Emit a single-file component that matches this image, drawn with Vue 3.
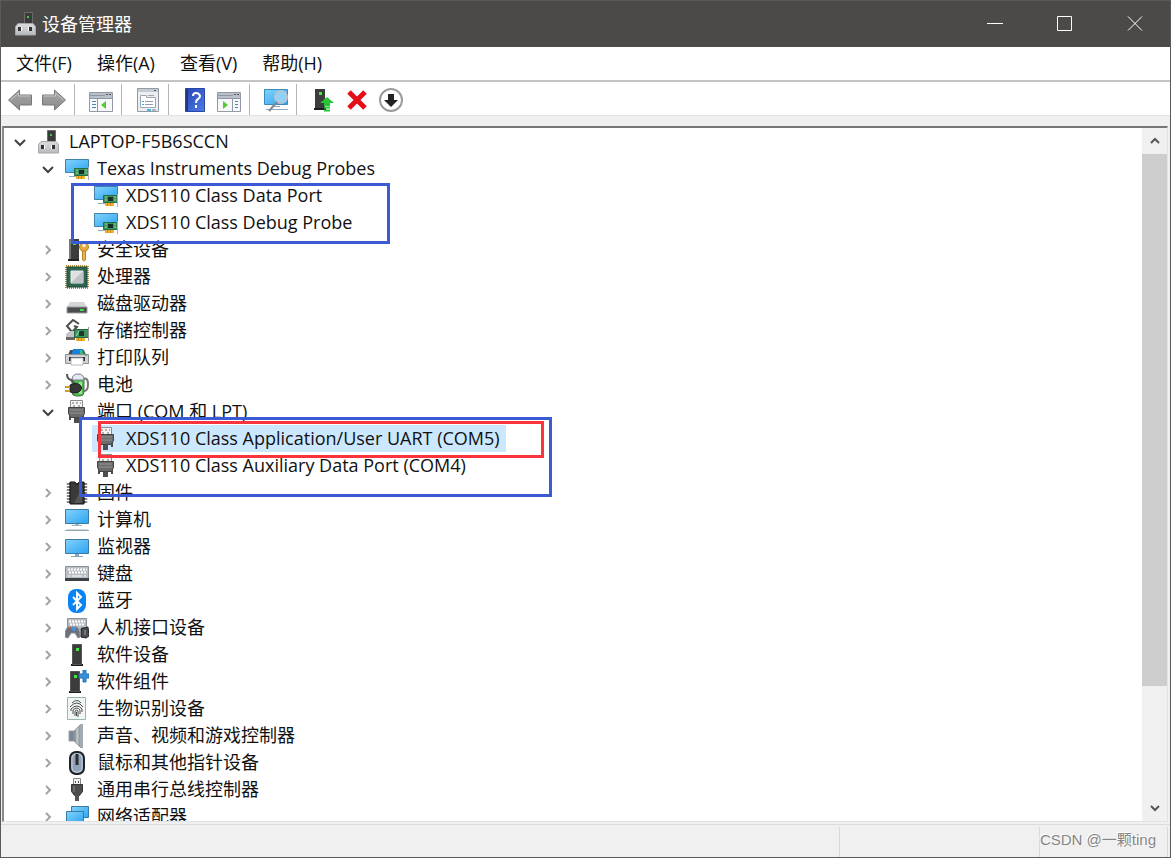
<template>
  <div class="window">
    <svg class="sprite" aria-hidden="true">
      <defs>
        <linearGradient id="screen" x1="0" y1="0" x2="1" y2="1">
          <stop offset="0" stop-color="#84d3fb" />
          <stop offset="1" stop-color="#2ba3f2" />
        </linearGradient>
        <linearGradient id="metal" x1="0" y1="0" x2="0" y2="1">
          <stop offset="0" stop-color="#dcdce0" />
          <stop offset="1" stop-color="#b9babf" />
        </linearGradient>
        <linearGradient id="arrow" x1="0" y1="0" x2="0" y2="1">
          <stop offset="0" stop-color="#a8a8a8" />
          <stop offset="1" stop-color="#8a8a8a" />
        </linearGradient>
        <linearGradient id="cone" x1="0" y1="0" x2="1" y2="0">
          <stop offset="0" stop-color="#66707c" />
          <stop offset="0.5" stop-color="#c6ccd2" />
          <stop offset="1" stop-color="#8f989f" />
        </linearGradient>
        <linearGradient id="helpbook" x1="0" y1="0" x2="1" y2="1">
          <stop offset="0" stop-color="#2746b0" />
          <stop offset="1" stop-color="#4f7bea" />
        </linearGradient>
      </defs>

      <symbol id="i-computer" viewBox="0 0 24 24">
        <path d="M10.500.5h8v12h-8z" fill="#3a3a3a" stroke="#6c6c6c" />
        <path d="M13 4h2v2h-2z" fill="#3fd03f" />
        <path d="M4 11.500h15l2.500 3v8.500h-20v-8.500z" fill="url(#metal)" stroke="#a6a6aa" />
        <path d="M4 15h3v4H4zM15 15h3v4h-3z" fill="#333" />
        <path d="M7 15h1v4H7zM14 15h1v4h-1z" fill="#fff" />
      </symbol>
      <symbol id="i-probe" viewBox="0 0 24 24">
        <path d="M.5 2.500h23v13H.5z" fill="url(#screen)" stroke="#3f81aa" />
        <path d="M4 19.500h7" stroke="#91a8b8" />
        <path d="M9.500 11.500h14v7h-14z" fill="#3e9460" stroke="#256d42" />
        <path d="M14 13h5v4h-5z" fill="#183023" />
        <path d="M11 13h2M11 16h2M20 13h2M20 16h2" stroke="#97d5a9" />
        <path d="M11 19h9v3h-9z" fill="#f5b02a" />
        <path d="M13.500 19v3M16.500 19v3" stroke="#c98710" />
        <path d="M23.500 10v13" stroke="#b0b0b0" />
      </symbol>
      <symbol id="i-security" viewBox="0 0 24 24">
        <path d="M3 21h11v2H3z" fill="#222" />
        <path d="M4 1h10v20H4z" fill="#3c3c3c" />
        <path d="M4 1h2v20H4z" fill="#777" />
        <path d="M8 4h3v3H8z" fill="#3fe03f" />
        <circle cx="19" cy="9" r="4.500" fill="#e5ad3c" stroke="#b5832c" />
        <path d="M17.500 13h3v9l-1.500 1-1.500-1z" fill="#e9b848" stroke="#b5832c" />
        <circle cx="19" cy="7.500" r="1.500" fill="#fff" />
      </symbol>
      <symbol id="i-cpu" viewBox="0 0 24 24">
        <path d="M1 1h22v22H1z" fill="none" stroke="#b38a37" stroke-width="2" stroke-dasharray="1 1" />
        <path d="M2 2h20v20H2z" fill="#2d6550" stroke="#1d4a38" />
        <path d="M6 6h12v12H6z" fill="#dfe0e2" stroke="#eef1ef" />
        <path d="M18 6v12H6z" fill="#bfc2c5" />
      </symbol>
      <symbol id="i-disk" viewBox="0 0 24 24">
        <path d="M5 10h14l3 5H2z" fill="#d3d5d8" />
        <path d="M2 15h20v6H2z" fill="#4a4c50" stroke="#9b9da1" />
        <path d="M15 17h4v2h-4z" fill="#36e045" />
      </symbol>
      <symbol id="i-storage" viewBox="0 0 24 24">
        <path d="M14 5L8 1 2 7l5 6 5-5-3-1" fill="none" stroke="#4c4c4c" stroke-width="2" />
        <path d="M1 15l4-3h5v8H1z" fill="#c3c5c8" />
        <path d="M1 18h9v3H1z" fill="#666" />
        <path d="M9.500 10.500h14v8h-14z" fill="#3e9460" stroke="#226541" />
        <path d="M14 12h5v5h-5z" fill="#1b382a" />
        <path d="M11 17l3-5" stroke="#9adbae" />
        <path d="M11 19h9v3h-9z" fill="#f5b02a" />
        <path d="M13.500 19v3M16.500 19v3" stroke="#c98710" />
        <path d="M23.500 8v14" stroke="#9b9b9b" />
      </symbol>
      <symbol id="i-printer" viewBox="0 0 24 24">
        <path d="M5 4h14l2 5H3z" fill="#4b4d52" />
        <path d="M8 3h10l1 5H7z" fill="#1684dd" />
        <path d="M15 4h2l1 4h-3z" fill="#36c26d" />
        <path d="M.5 8.500h23v9H.5z" fill="#cfd1d4" stroke="#8b8f94" />
        <path d="M4 11h16v4H4z" fill="#2d2f32" />
        <path d="M6 12h12v7H6z" fill="#fff" stroke="#b5b8bd" />
        <path d="M20 9.500h2" stroke="#31c749" />
      </symbol>
      <symbol id="i-battery" viewBox="0 0 24 24">
        <path d="M18 6q5-2 5 5t-4 7" fill="none" stroke="#777" stroke-width="2" />
        <rect x="7" y="3" width="12" height="20" rx="4" fill="#4fb951" stroke="#4d6c4f" />
        <path d="M7 7q0-6 6-6t6 6z" fill="#e6e8f2" stroke="#777a8d" />
        <path d="M14 9h3v12h-3z" fill="#9ae594" />
        <path d="M2 1q0 5 4 6l4 4" fill="none" stroke="#555" stroke-width="2" />
        <path d="M5 12q9-4 12 3-3 7-12 4z" fill="#363636" stroke="#1f1f1f" />
        <path d="M0 14h5M0 18h5" stroke="#d39a22" stroke-width="2" />
      </symbol>
      <symbol id="i-port" viewBox="0 0 24 24">
        <path d="M5.500.5h12v7h-12z" fill="#f4f4f4" stroke="#8d8d8d" />
        <path d="M7 3h2M11 3h2M15 3h1M8 6h2M13 6h2" stroke="#6c6c6c" />
        <path d="M3.500 7.500h16v6l-2 4h-12l-2-4z" fill="#6b6b6b" stroke="#434343" />
        <path d="M5 10h13M5 13h13" stroke="#959595" />
        <path d="M4 16h2v4H4zM17 16h2v4h-2zM9 18h5v5H9z" fill="#4d4d4d" />
      </symbol>
      <symbol id="i-firmware" viewBox="0 0 24 24">
        <path d="M2 3h20M2 6h20M2 9h20M2 12h20M2 15h20M2 18h20M2 21h20" stroke="#444" stroke-width="2" />
        <path d="M1 3h3M1 6h3M1 9h3M1 12h3M1 15h3M1 18h3M1 21h3M20 3h3M20 6h3M20 9h3M20 12h3M20 15h3M20 18h3M20 21h3" stroke="#ccc" />
        <path d="M5 1h5l2 3 2-3h5v22H5z" fill="#3a3a3a" stroke="#151515" />
        <path d="M17 7v15H9z" fill="#555" />
      </symbol>
      <symbol id="i-pc" viewBox="0 0 24 24">
        <path d="M.5 1.500h23v14H.5z" fill="url(#screen)" stroke="#3a7ba6" />
        <path d="M10 16h4v1h3v1H7v-1h3z" fill="#9db3c1" />
        <path d="M2 21h20l2 2H0z" fill="#cbd4db" />
        <path d="M0 22.500h24" stroke="#93a7b5" />
      </symbol>
      <symbol id="i-monitor" viewBox="0 0 24 24">
        <path d="M.5 4.500h23v14H.5z" fill="url(#screen)" stroke="#3a7ba6" />
        <path d="M10 19h4v2h4v1H6v-1h4z" fill="#8ca6b7" />
      </symbol>
      <symbol id="i-keyboard" viewBox="0 0 24 24">
        <path d="M.5 4.500h23v12H.5z" fill="#b9bec4" stroke="#8b929a" />
        <path d="M3 7.500h19M4 10.500h17" stroke="#fff" stroke-width="2" stroke-dasharray="2 1" />
        <path d="M3 14h2M7 14h10M19 14h2" stroke="#fff" />
        <path d="M0 16h24v3H0z" fill="#3d4146" />
      </symbol>
      <symbol id="i-bluetooth" viewBox="0 0 24 24">
        <rect x="3" y="0" width="18" height="24" rx="8" fill="#0a84f5" />
        <path d="M8 8l8 8-4 4V4l4 4-8 8" fill="none" stroke="#fff" stroke-width="2" />
      </symbol>
      <symbol id="i-hid" viewBox="0 0 24 24">
        <path d="M2.500 2.500h19v11h-19z" fill="#b9bec4" stroke="#8b929a" />
        <path d="M4 5.500h16M5 8.500h15" stroke="#fff" stroke-width="2" stroke-dasharray="2 1" />
        <path d="M3 11h9q3 3 3 10l-2 1-3-5H6l-3 5-3-1q0-8 3-10z" fill="#6a717a" stroke="#858c95" />
        <circle cx="9" cy="13" r="2" fill="#3996e8" />
        <circle cx="6" cy="12" r="1" fill="#e2594a" />
        <path d="M16 14q0-3 3-2l4-1 1 9-3 2-5-1z" fill="#484c52" stroke="#222" />
        <path d="M20 14v5" stroke="#9ba1a8" />
      </symbol>
      <symbol id="i-software" viewBox="0 0 24 24">
        <path d="M6 21h12v2H6z" fill="#1e1e1e" />
        <path d="M7.500 1.500h9v20h-9z" fill="#3c3c3c" stroke="#555" />
        <path d="M11 5h3v3h-3z" fill="#42e642" />
      </symbol>
      <symbol id="i-component" viewBox="0 0 24 24">
        <path d="M4 21h12v2H4z" fill="#1e1e1e" />
        <path d="M5.500 1.500h9v20h-9z" fill="#3c3c3c" stroke="#555" />
        <path d="M9 5h3v3H9z" fill="#42e642" />
        <path d="M18 0h3v4h3v4h-3v4h-3V8h-4V4h4z" fill="#3b8fd4" stroke="#2475ba" />
      </symbol>
      <symbol id="i-biometric" viewBox="0 0 24 24">
        <path d="M2.500.5h18v22h-18z" fill="#f1f5f3" stroke="#9ab7ad" />
        <path d="M7 6q5-5 9 0M5 10q7-8 13 0M6 14v-2q6-6 11 0v3M8 17v-4q4-4 7 0v4M10 19v-5q2-2 3 0v6M11.500 15v4" fill="none" stroke="#4a4d4c" />
      </symbol>
      <symbol id="i-sound" viewBox="0 0 24 24">
        <path d="M4 7h6v10H4z" fill="#7b8793" stroke="#9aa3ac" />
        <path d="M9 7l6-6v22l-6-6z" fill="url(#cone)" stroke="#959da5" />
        <path d="M15 0h3v24h-3z" fill="#a3abb2" />
      </symbol>
      <symbol id="i-mouse" viewBox="0 0 24 24">
        <rect x="5" y="1" width="14" height="22" rx="6" fill="#8fa2b8" stroke="#202225" stroke-width="2" />
        <rect x="7" y="3" width="10" height="18" rx="4" fill="none" stroke="#c5d0dc" />
        <path d="M12 3v11" stroke="#2a2c2e" stroke-width="3" />
      </symbol>
      <symbol id="i-usb" viewBox="0 0 24 24">
        <path d="M8.500.5h7v6h-7z" fill="#f2f2f2" stroke="#888" />
        <path d="M10 3h1v2h-1zM13 3h1v2h-1z" fill="#555" />
        <path d="M6.500 6.500h11v7l-3 4h-5l-3-4z" fill="#4d4d4d" stroke="#333" />
        <path d="M10 17h4v6h-4z" fill="#555" />
        <path d="M9 8v6" stroke="#888" />
      </symbol>
      <symbol id="i-network" viewBox="0 0 24 24">
        <path d="M6.500 1.500h17v11h-17z" fill="url(#screen)" stroke="#3a7ba6" />
        <path d="M1.500 6.500h17v12h-17z" fill="url(#screen)" stroke="#3a7ba6" />
      </symbol>

      <symbol id="t-back" viewBox="0 0 24 24">
        <path d="M.5 12L11.500 2v5h12v10h-12v5z" fill="url(#arrow)" stroke="#787878" />
        <path d="M2.500 12l8-7v3h12" fill="none" stroke="#c4c4c4" />
      </symbol>
      <symbol id="t-forward" viewBox="0 0 24 24">
        <path d="M23.500 12L12.500 2v5H.5v10h12v5z" fill="url(#arrow)" stroke="#787878" />
        <path d="M1.500 8h12V5l8 7" fill="none" stroke="#c4c4c4" />
      </symbol>
      <symbol id="t-tree" viewBox="0 0 24 24">
        <path d="M.5 4.500h23v19H.5z" fill="#f7f8f9" stroke="#949aa3" />
        <path d="M1 5h22v5H1z" fill="#b9c0c9" />
        <path d="M1 7.500h15M1 10.500h22" stroke="#8f97a1" />
        <path d="M8.500 11v12" stroke="#8f97a1" />
        <path d="M17 6.500h2M20 6.500h2" stroke="#50555c" />
        <path d="M3 13.500h4M3 16.500h4M3 19.500h4" stroke="#4d86bd" />
        <path d="M17 13v8l-5-4z" fill="#55c936" />
      </symbol>
      <symbol id="t-props" viewBox="0 0 24 24">
        <path d="M1.500.5h21v23h-21z" fill="#eceef1" stroke="#949aa3" />
        <path d="M2 1h20v3H2z" fill="#c5cbd3" />
        <path d="M18 2.500h2" stroke="#50555c" />
        <path d="M4.500 7.500h6v2h9v10h-15z" fill="#fff" stroke="#a0a6b0" />
        <path d="M12 7.500h6" stroke="#a0a6b0" />
        <path d="M9 13.500h8M9 16.500h8" stroke="#919ba9" />
        <path d="M6 13.500h2M6 16.500h2" stroke="#32a6e6" />
        <path d="M11 21h4v2h-4z" fill="#3ebcf0" />
        <path d="M16 21h4v2h-4z" fill="#aeb5bf" />
      </symbol>
      <symbol id="t-help" viewBox="0 0 24 24">
        <path d="M2.500.5h19v23h-19z" fill="url(#helpbook)" stroke="#2747a5" />
        <path d="M3 1h2v22H3z" fill="#203782" />
        <path d="M10 8q0-3 3-3t4 3q0 2-2 3t-2 4" fill="none" stroke="#fff" stroke-width="2" />
        <path d="M12 17h2v3h-2z" fill="#fff" />
      </symbol>
      <symbol id="t-action" viewBox="0 0 24 24">
        <path d="M.5 4.500h23v19H.5z" fill="#f7f8f9" stroke="#949aa3" />
        <path d="M1 5h22v5H1z" fill="#b9c0c9" />
        <path d="M1 7.500h15M1 10.500h22" stroke="#8f97a1" />
        <path d="M15.500 11v12" stroke="#8f97a1" />
        <path d="M17 6.500h2M20 6.500h2" stroke="#50555c" />
        <path d="M18 13.500h3M18 16.500h3M18 19.500h3" stroke="#4d86bd" />
        <path d="M6 13v8l5-4z" fill="#55c936" />
      </symbol>
      <symbol id="t-scan" viewBox="0 0 24 24">
        <path d="M.5 1.500h23v15H.5z" fill="url(#screen)" stroke="#3b8abd" />
        <path d="M8 18.500h8M2 21.500h22" stroke="#91a9b9" />
        <circle cx="17" cy="9" r="6" fill="#8fd2f8" stroke="#b5c5d0" stroke-width="2" />
        <path d="M13 14l-8 9" stroke="#7d8891" stroke-width="2" />
      </symbol>
      <symbol id="t-update" viewBox="0 0 24 24">
        <path d="M3 20h12v2H3z" fill="#1e1e1e" />
        <path d="M4 1h10v19H4z" fill="#3c3c3c" />
        <path d="M8 4h3v3H8z" fill="#3cf03c" />
        <path d="M16 9l7 6h-4v3h-6v-3H9z" fill="#27c437" />
        <path d="M13 19.500h6M13 22.500h6" stroke="#27c437" stroke-width="2" />
      </symbol>
      <symbol id="t-remove" viewBox="0 0 24 24">
        <path d="M4 4l16 16M20 4L4 20" stroke="#e20f19" stroke-width="5" />
      </symbol>
      <symbol id="t-disable" viewBox="0 0 24 24">
        <circle cx="12" cy="12" r="11" fill="#fff" stroke="#9b9b9b" stroke-width="2" />
        <path d="M9 6h6v6h4l-7 7-7-7h4z" fill="#222" />
      </symbol>
    </svg>

    <header class="titlebar">
      <svg class="icon"><use href="#i-computer" /></svg>
      <h1>设备管理器</h1>
      <button class="caption" aria-label="最小化">
        <svg viewBox="0 0 16 16"><path d="M0 7.500h16" /></svg>
      </button>
      <button class="caption" aria-label="最大化">
        <svg viewBox="0 0 16 16"><path d="M.5.5h14v14H.5z" /></svg>
      </button>
      <button class="caption" aria-label="关闭">
        <svg viewBox="0 0 16 16"><path d="M1 .5l14 14M15 .5l-14 14" /></svg>
      </button>
    </header>

    <nav class="menubar">
      <button v-for="menu in menus" :key="menu">{{ menu }}</button>
    </nav>

    <div class="toolbar">
      <div v-for="(group, i) in tools" :key="i" class="group">
        <button v-for="tool in group" :key="tool.icon" :aria-label="tool.label">
          <svg class="icon"><use :href="'#t-' + tool.icon" /></svg>
        </button>
      </div>
    </div>

    <main class="pane">
      <div class="viewport">
        <ul class="tree">
          <li v-for="row in rows" :key="row.name" :class="['row', 'level-' + row.level]">
            <button v-if="row.level < 2" class="toggle" :class="{ open: row.open }" :aria-label="row.name" @click="row.open = !row.open">
              <svg viewBox="0 0 12 12"><path :d="row.open ? 'M1 4l5 5 5-5' : 'M4 2l4 4-4 4'" /></svg>
            </button>
            <span v-else class="toggle"></span>
            <span class="item" :class="{ selected: row.name === selected }" @click="selected = row.name">
              <svg class="icon"><use :href="'#i-' + row.icon" /></svg>
              <span>{{ row.name }}</span>
            </span>
          </li>
        </ul>
        <div class="mark mark-probes"></div>
        <div class="mark mark-ports"></div>
        <div class="mark mark-uart"></div>
      </div>
      <div class="scrollbar">
        <button aria-label="向上滚动"><svg viewBox="0 0 12 12"><path d="M2 8l4-4 4 4" /></svg></button>
        <div class="track"><div class="thumb"></div></div>
        <button aria-label="向下滚动"><svg viewBox="0 0 12 12"><path d="M2 4l4 4 4-4" /></svg></button>
      </div>
    </main>

    <footer class="statusbar">
      <span class="cell main"></span>
      <span class="cell wide"></span>
      <span class="cell narrow"></span>
      <span class="watermark">CSDN @一颗ting</span>
    </footer>
  </div>
</template>

<script setup>
import { ref } from 'vue';

const menus = ['文件(F)', '操作(A)', '查看(V)', '帮助(H)'];

// Each inner list is one group, groups are split by a line
const tools = [
  [{ icon: 'back', label: '后退' }, { icon: 'forward', label: '前进' }],
  [{ icon: 'tree', label: '显示/隐藏控制台树' }],
  [{ icon: 'props', label: '属性' }],
  [{ icon: 'help', label: '帮助' }, { icon: 'action', label: '操作窗格' }],
  [{ icon: 'scan', label: '扫描检测硬件改动' }],
  [
    { icon: 'update', label: '更新驱动程序' },
    { icon: 'remove', label: '卸载设备' },
    { icon: 'disable', label: '禁用设备' },
  ],
];

const rows = ref([
  { level: 0, icon: 'computer', name: 'LAPTOP-F5B6SCCN', open: true },
  { level: 1, icon: 'probe', name: 'Texas Instruments Debug Probes', open: true },
  { level: 2, icon: 'probe', name: 'XDS110 Class Data Port' },
  { level: 2, icon: 'probe', name: 'XDS110 Class Debug Probe' },
  { level: 1, icon: 'security', name: '安全设备' },
  { level: 1, icon: 'cpu', name: '处理器' },
  { level: 1, icon: 'disk', name: '磁盘驱动器' },
  { level: 1, icon: 'storage', name: '存储控制器' },
  { level: 1, icon: 'printer', name: '打印队列' },
  { level: 1, icon: 'battery', name: '电池' },
  { level: 1, icon: 'port', name: '端口 (COM 和 LPT)', open: true },
  { level: 2, icon: 'port', name: 'XDS110 Class Application/User UART (COM5)' },
  { level: 2, icon: 'port', name: 'XDS110 Class Auxiliary Data Port (COM4)' },
  { level: 1, icon: 'firmware', name: '固件' },
  { level: 1, icon: 'pc', name: '计算机' },
  { level: 1, icon: 'monitor', name: '监视器' },
  { level: 1, icon: 'keyboard', name: '键盘' },
  { level: 1, icon: 'bluetooth', name: '蓝牙' },
  { level: 1, icon: 'hid', name: '人机接口设备' },
  { level: 1, icon: 'software', name: '软件设备' },
  { level: 1, icon: 'component', name: '软件组件' },
  { level: 1, icon: 'biometric', name: '生物识别设备' },
  { level: 1, icon: 'sound', name: '声音、视频和游戏控制器' },
  { level: 1, icon: 'mouse', name: '鼠标和其他指针设备' },
  { level: 1, icon: 'usb', name: '通用串行总线控制器' },
  { level: 1, icon: 'network', name: '网络适配器' },
]);

const selected = ref('XDS110 Class Application/User UART (COM5)');
</script>

<style>
body {
  margin: 0;
}
</style>

<style scoped>
.window {
  display: flex;
  flex-direction: column;
  box-sizing: border-box;
  height: 100vh;
  border: 1px solid #5a5a5a;
  background: #f0f0f0;
  color: #111;
  font-family: "Open Sans", "Noto Sans CJK SC", sans-serif;
  font-size: 18px;
  line-height: 27px;
}

.sprite {
  position: absolute;
  width: 0;
  height: 0;
}

button {
  padding: 0;
  border: 0;
  background: none;
  color: inherit;
  font: inherit;
}

.icon {
  flex: none;
  width: 24px;
  height: 24px;
}

.titlebar {
  display: flex;
  align-items: center;
  flex: none;
  height: 46px;
  padding-left: 13px;
  background: #4c4a48;
  color: #fff;
}

.titlebar h1 {
  flex: 1;
  margin: 0 0 0 4px;
  font-size: 18px;
  font-weight: 400;
}

.caption {
  display: flex;
  align-items: center;
  justify-content: center;
  width: 70px;
  height: 46px;
}

.caption svg {
  width: 16px;
  height: 16px;
  fill: none;
  stroke: #fff;
}

.menubar {
  display: flex;
  flex: none;
  height: 33px;
  padding-left: 3px;
  border-bottom: 2px solid #c4c4c6;
  background: #fff;
}

.menubar button {
  padding: 0 13px 0 12px;
}

.toolbar {
  display: flex;
  flex: none;
  height: 33px;
  padding-left: 2px;
  border-bottom: 1px solid #e3e3e3;
  background: #fff;
}

.group {
  display: flex;
  padding-top: 2px;
}

.group + .group {
  margin: 2px 0 0 3px;
  padding: 0 0 0 9px;
  border-left: 1px solid #b4b4b4;
}

.group button {
  display: flex;
  align-items: center;
  justify-content: center;
  width: 34px;
}

.pane {
  display: flex;
  flex: 1;
  min-height: 0;
  margin: 10px 2px 0 1px;
  border: 1px solid #e3e3e3;
  border-top: 2px solid #777;
  border-left: 2px solid #8a8a8a;
  background: #fff;
}

.viewport {
  position: relative;
  flex: 1;
  overflow: hidden;
}

.tree {
  margin: 0;
  padding: 0 0 0 4px;
  list-style: none;
}

.row {
  display: flex;
  height: 27px;
  white-space: nowrap;
}

.level-1 {
  padding-left: 28px;
}

.level-2 {
  padding-left: 57px;
}

.toggle {
  display: flex;
  align-items: center;
  justify-content: center;
  width: 24px;
  margin-right: 3px;
}

.toggle svg {
  width: 12px;
  height: 12px;
  fill: none;
  stroke: #a3a3a3;
  stroke-width: 2;
}

.toggle.open svg {
  stroke: #404040;
}

.item {
  display: flex;
  align-items: center;
  gap: 8px;
  padding: 0 6px 0 2px;
}

.selected {
  background: #cce8ff;
}

.mark {
  position: absolute;
  box-sizing: border-box;
  border: 3px solid #3b5bd5;
  pointer-events: none;
}

.mark-probes {
  top: 55px;
  left: 67px;
  width: 319px;
  height: 61px;
}

.mark-ports {
  top: 289px;
  left: 75px;
  width: 473px;
  height: 80px;
}

.mark-uart {
  top: 293px;
  left: 94px;
  width: 446px;
  height: 37px;
  border-color: #f9343a;
}

.scrollbar {
  display: flex;
  flex-direction: column;
  width: 25px;
  background: #f0f0f0;
}

.scrollbar button {
  display: flex;
  align-items: center;
  justify-content: center;
  height: 26px;
}

.scrollbar svg {
  width: 12px;
  height: 12px;
  fill: none;
  stroke: #555;
  stroke-width: 2;
}

.track {
  flex: 1;
}

.thumb {
  height: 83%;
  background: #cdcdcd;
}

.statusbar {
  position: relative;
  display: flex;
  flex: none;
  height: 30px;
  margin-top: 2px;
  padding: 2px 2px 0 0;
  border-top: 1px solid #dcdcdc;
}

.cell {
  border-right: 1px solid #d9d9d9;
}

.main {
  flex: 1;
}

.wide {
  width: 199px;
}

.narrow {
  width: 127px;
}

.watermark {
  position: absolute;
  right: 14px;
  bottom: 5px;
  color: #868686;
  font-family: "Liberation Sans", "Noto Sans CJK SC", sans-serif;
  font-size: 15px;
  line-height: 24px;
  text-shadow: -1px -1px 0 #fff;
}
</style>
